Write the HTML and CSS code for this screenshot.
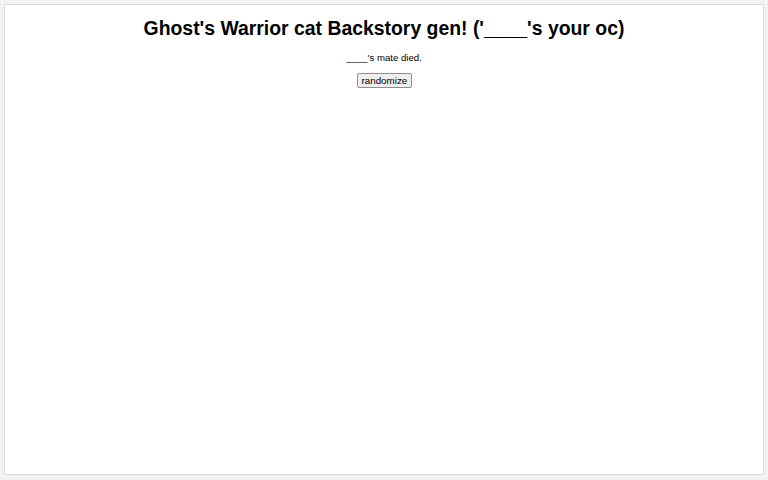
FILE: index.html
```html
<!DOCTYPE html>
<html>
<head>
<meta charset="utf-8">
<link rel="stylesheet" href="styles.css">
</head>
<body>
<div class="panel">
  <h1 class="title">Ghost's Warrior cat Backstory gen! ('____'s your oc)</h1>
  <p class="story">____'s mate died.</p>
  <button class="btn">randomize</button>
</div>
</body>
</html>
```
FILE: styles.css
```css
html, body {
  margin: 0;
  padding: 0;
}
body {
  background: #f2f2f2;
  padding: 4px;
  font-family: "Liberation Sans", Arial, sans-serif;
  box-sizing: border-box;
  height: 480px;
}
.panel {
  background: #fff;
  border: 1px solid #dcdcdc;
  height: 471px;
  box-sizing: border-box;
  display: flex;
  flex-direction: column;
  align-items: center;
}
.title {
  font-size: 19.4px;
  font-weight: bold;
  margin: 12px 0 0;
  line-height: 23px;
  color: #000;
}
.story {
  font-size: 9.6px;
  margin: 12px 0 0;
  line-height: 11px;
  color: #000;
}
.btn {
  margin-top: 10px;
  font-family: "Liberation Sans", Arial, sans-serif;
  font-size: 9.8px;
  padding: 1px 4px;
  background: #efefef;
  border: 1px solid #8f8f8f;
  border-radius: 2px;
  color: #000;
  height: 15px;
  width: 55px;
  line-height: 11px;
}
```
